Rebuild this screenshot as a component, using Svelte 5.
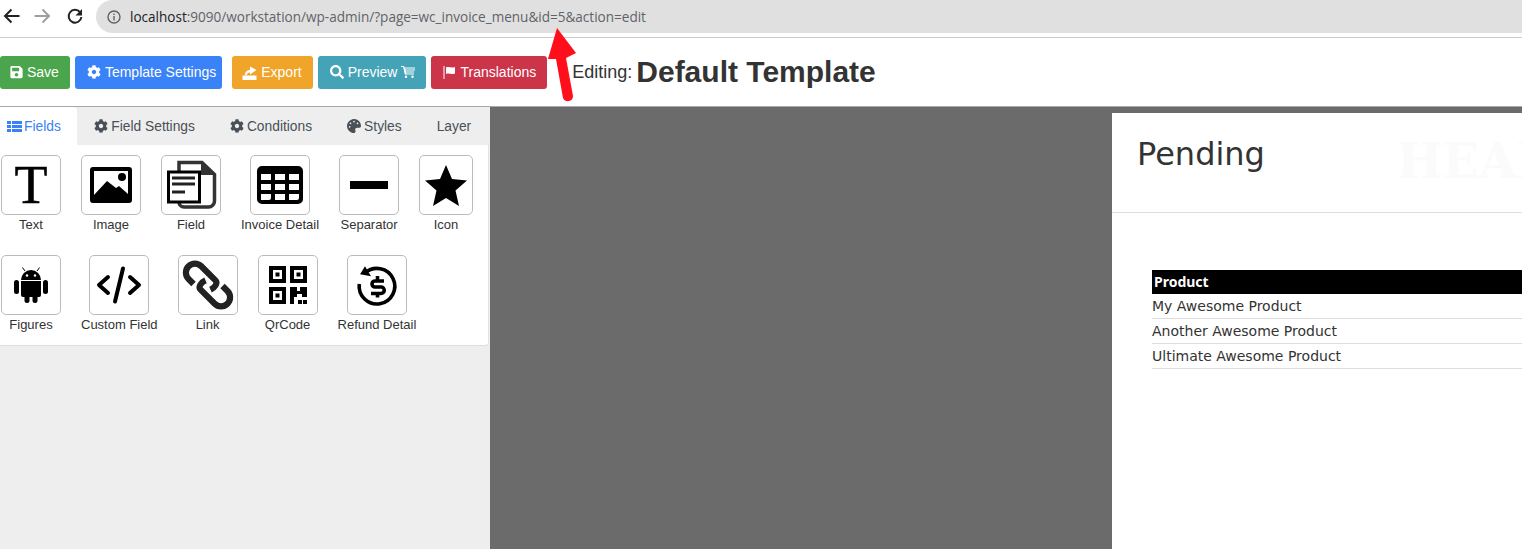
<script>
	const cog = 'M487.4 315.7l-42.6-24.6c4.3-23.2 4.3-47 0-70.2l42.6-24.6c4.9-2.8 7.1-8.6 5.5-14-11.1-35.6-30-67.8-54.7-94.6-3.8-4.1-10-5.1-14.8-2.3L380.8 110c-17.9-15.4-38.5-27.3-60.8-35.1V25.8c0-5.6-3.9-10.5-9.4-11.7-36.7-8.2-74.3-7.8-109.2 0-5.5 1.2-9.4 6.1-9.4 11.7V75c-22.2 7.9-42.8 19.8-60.8 35.1L88.7 85.5c-4.9-2.8-11-1.9-14.8 2.3-24.7 26.7-43.6 58.9-54.7 94.6-1.7 5.4.6 11.2 5.5 14L67.3 221c-4.3 23.2-4.3 47 0 70.2l-42.6 24.6c-4.9 2.8-7.1 8.6-5.5 14 11.1 35.6 30 67.8 54.7 94.6 3.8 4.1 10 5.1 14.8 2.3l42.6-24.6c17.9 15.4 38.5 27.3 60.8 35.1v49.2c0 5.6 3.9 10.5 9.4 11.7 36.7 8.2 74.3 7.8 109.2 0 5.5-1.2 9.4-6.1 9.4-11.7v-49.2c22.2-7.9 42.8-19.8 60.8-35.1l42.6 24.6c4.9 2.8 11 1.9 14.8-2.3 24.7-26.7 43.6-58.9 54.7-94.6 1.5-5.5-.7-11.3-5.6-14.1zM256 336c-44.1 0-80-35.9-80-80s35.9-80 80-80 80 35.9 80 80-35.9 80-80 80z';
	const save = 'M433.941 129.941l-83.882-83.882A48 48 0 0 0 316.118 32H48C21.49 32 0 53.49 0 80v352c0 26.51 21.49 48 48 48h352c26.51 0 48-21.49 48-48V163.882a48 48 0 0 0-14.059-33.941zM224 416c-35.346 0-64-28.654-64-64 0-35.346 28.654-64 64-64s64 28.654 64 64c0 35.346-28.654 64-64 64zm96-304.52V212c0 6.627-5.373 12-12 12H76c-6.627 0-12-5.373-12-12V108c0-6.627 5.373-12 12-12h228.52c3.183 0 6.235 1.264 8.485 3.515l3.48 3.48A11.996 11.996 0 0 1 320 111.48z';
	const search = 'M505 442.7L405.3 343c-4.5-4.5-10.6-7-17-7H372c27.6-35.3 44-79.7 44-128C416 93.1 322.9 0 208 0S0 93.1 0 208s93.1 208 208 208c48.3 0 92.7-16.4 128-44v16.3c0 6.4 2.5 12.5 7 17l99.7 99.7c9.4 9.4 24.6 9.4 33.9 0l28.3-28.3c9.4-9.4 9.4-24.6.1-34zM208 336c-70.7 0-128-57.2-128-128 0-70.7 57.2-128 128-128 70.7 0 128 57.2 128 128 0 70.7-57.2 128-128 128z';
	const palette = 'M204.3 5C104.9 24.4 24.8 104.3 5.2 203.4c-37 187 131.7 326.4 258.8 306.7 41.2-6.4 61.4-54.6 42.5-91.7-23.1-45.4 9.9-98.4 60.9-98.4h79.7c35.8 0 64.8-29.6 64.9-65.3C511.5 97.1 368.1-26.9 204.3 5zM96 320c-17.7 0-32-14.3-32-32s14.3-32 32-32 32 14.3 32 32-14.3 32-32 32zm32-128c-17.7 0-32-14.3-32-32s14.3-32 32-32 32 14.3 32 32-14.3 32-32 32zm128-64c-17.7 0-32-14.3-32-32s14.3-32 32-32 32 14.3 32 32-14.3 32-32 32zm128 64c-17.7 0-32-14.3-32-32s14.3-32 32-32 32 14.3 32 32-14.3 32-32 32z';

	const rows = ['My Awesome Product', 'Another Awesome Product', 'Ultimate Awesome Product'];
</script>

<div class="app">
	<div class="chrome">
		<div class="nav">
			<svg width="18" height="18" viewBox="0 0 18 18"><path d="M17.500 9H3M9.500 2.500L3 9l6.500 6.500" fill="none" stroke="#222" stroke-width="2"/></svg>
			<svg width="18" height="18" viewBox="0 0 18 18"><path d="M0.500 9H15M8.500 2.500L15 9l-6.500 6.500" fill="none" stroke="#a0a0a0" stroke-width="2"/></svg>
			<svg width="18" height="18" viewBox="0 0 18 18"><path d="M14 5.200A6.400 6.400 0 1 0 15.400 10" fill="none" stroke="#222" stroke-width="2"/><path d="M16 2v6.500H9.500z" fill="#222"/></svg>
		</div>
		<div class="address">
			<svg class="info" width="14" height="14" viewBox="0 0 14 14"><circle cx="7" cy="7" r="6" fill="none" stroke="#5f6368" stroke-width="1.4"/><path d="M6.300 6h1.400v4.400H6.300zM6.300 3.500h1.400v1.400H6.300z" fill="#5f6368"/></svg>
			<span class="url"><b>localhost</b>:9090/workstation/wp-admin/?page=wc_invoice_menu&amp;id=5&amp;action=edit</span>
		</div>
	</div>

	<div class="toolbar">
		<button class="green">
			<svg width="13" height="14" viewBox="0 0 448 512"><path d={save} /></svg>
			Save
		</button>
		<button class="blue">
			<svg width="14" height="14" viewBox="0 0 512 512"><path d={cog} /></svg>
			Template Settings
		</button>
		<button class="orange">
			<svg width="15" height="15" viewBox="0 0 15 15"><path d="M0.500 10.500h14V15h-14zM3 10C3 7 5 5 8 5V1.500L14.500 5 8 9.500V7.500C6 7.500 5 8.500 5 10z" /></svg>
			Export
		</button>
		<button class="teal">
			<svg width="14" height="14" viewBox="0 0 512 512"><path d={search} /></svg>
			Preview
			<svg width="14" height="12" viewBox="0 0 14 12"><path d="M0 0h3l.5 1.500H14v1H4l.4 1H14v1H4.600l.3 1H13v1H5.100l.4 1H13v1H3.800L2.200 1H0z" /><circle cx="5" cy="10.800" r="1.200" /><circle cx="11.500" cy="10.800" r="1.200" /></svg>
		</button>
		<button class="red">
			<svg width="14" height="13" viewBox="0 0 14 13"><path d="M0.500 0h1v13h-1zM3 1.500c3-1.500 5 1 9-.5v6.500c-4 1.500-6-1-9 .5z" /></svg>
			Translations
		</button>
		<span class="editing">Editing:</span>
		<h1>Default Template</h1>
	</div>

	<div class="main">
		<aside>
			<div class="tabs">
				<div class="tab active">
					<svg width="15" height="13" viewBox="0 0 15 13"><path d="M0 1h4v3H0zM5 1h10v3H5zM0 5h4v3H0zM5 5h10v3H5zM0 9h4v3H0zM5 9h10v3H5z" /></svg>
					Fields
				</div>
				<div class="tab">
					<svg width="14" height="14" viewBox="0 0 512 512"><path d={cog} /></svg>
					Field Settings
				</div>
				<div class="tab">
					<svg width="14" height="14" viewBox="0 0 512 512"><path d={cog} /></svg>
					Conditions
				</div>
				<div class="tab">
					<svg width="14" height="14" viewBox="0 0 512 512"><path d={palette} /></svg>
					Styles
				</div>
				<div class="tab">Layer</div>
			</div>

			<div class="fields">
				<div class="tool">
					<div class="box"><span class="t">T</span></div>
					<span>Text</span>
				</div>
				<div class="tool">
					<div class="box">
						<svg width="42" height="36" viewBox="0 0 42 36"><path fill-rule="evenodd" d="M3 0h36a3 3 0 0 1 3 3v30a3 3 0 0 1-3 3H3a3 3 0 0 1-3-3V3a3 3 0 0 1 3-3zM4 4v24l13-14 9 7 3-2 9 8V4z" /><circle cx="32" cy="10" r="4" /></svg>
					</div>
					<span>Image</span>
				</div>
				<div class="tool">
					<div class="box">
						<svg width="60" height="60" viewBox="0 0 60 60">
							<path d="M18 7.500h23l12.500 12V46a6 6 0 0 1-6 6H23a5 5 0 0 1-5-5V7.500z" fill="#fff" stroke="#333" stroke-width="3.500" />
							<path d="M40 6l15 14H40z" fill="#333" />
							<rect x="7.500" y="17" width="31" height="30" fill="#fff" stroke="#000" stroke-width="3" />
							<path d="M11 23h23M11 29h23M11 37h13" stroke="#222" stroke-width="3" fill="none" />
						</svg>
					</div>
					<span>Field</span>
				</div>
				<div class="tool">
					<div class="box">
						<svg width="46" height="38" viewBox="0 0 46 38">
							<path fill-rule="evenodd" d="M5 0h36a5 5 0 0 1 5 5v28a5 5 0 0 1-5 5H5a5 5 0 0 1-5-5V5a5 5 0 0 1 5-5zM4 8v6h10V8zm14 0v6h10V8zm14 0v6h10V8zM4 18v6h10v-6zm14 0v6h10v-6zm14 0v6h10v-6zM4 28v6h8a2 2 0 0 0 2-2v-4zm14 0v6h10v-6zm14 0v6h8a2 2 0 0 0 2-2v-4z" />
						</svg>
					</div>
					<span>Invoice Detail</span>
				</div>
				<div class="tool">
					<div class="box"><div class="sep"></div></div>
					<span>Separator</span>
				</div>
				<div class="tool">
					<div class="box star">
						<svg width="42" height="41" viewBox="0 0 42 41"><path d="M21 0l6 14 15 1.500-11.500 10L34 41l-13-8-13 8 3.500-15.500L0 15.500 15 14z" /></svg>
					</div>
					<span>Icon</span>
				</div>

				<div class="tool">
					<div class="box">
						<svg width="34" height="36" viewBox="0 0 34 36">
							<path d="M7 13a10 10 0 0 1 20 0z" />
							<path d="M11 4L8.500 0.500M23 4L25.500 0.500" stroke="#000" stroke-width="1" />
							<path d="M7 14h20v14a2 2 0 0 1-2 2H9a2 2 0 0 1-2-2z" />
							<rect x="0" y="13" width="5" height="14" rx="2.500" />
							<rect x="29" y="13" width="5" height="14" rx="2.500" />
							<rect x="10.500" y="28" width="5" height="8" rx="2.500" />
							<rect x="18.500" y="28" width="5" height="8" rx="2.500" />
							<circle cx="13" cy="8.500" r="1.200" fill="#fff" />
							<circle cx="21" cy="8.500" r="1.200" fill="#fff" />
						</svg>
					</div>
					<span>Figures</span>
				</div>
				<div class="tool">
					<div class="box">
						<svg width="46" height="38" viewBox="0 0 46 38" fill="none" stroke="#000" stroke-width="4" stroke-linecap="round" stroke-linejoin="round">
							<path d="M12 11L3 19l9 8M34 11l9 8-9 8M27 2.500L19 35.500" />
						</svg>
					</div>
					<span>Custom Field</span>
				</div>
				<div class="tool">
					<div class="box">
						<svg width="60" height="60" viewBox="0 0 60 60" fill="none" stroke="#222" stroke-width="6.200">
							<g transform="rotate(45 30 30)">
								<path d="M19 39.500H12a9 9 0 0 1 0-18H32c3.500 0 5 5 3 10" />
								<path d="M41 20.500H48a9 9 0 0 1 0 18H28c-3.500 0-5-5-3-10" />
							</g>
						</svg>
					</div>
					<span>Link</span>
				</div>
				<div class="tool">
					<div class="box">
						<svg width="38" height="38" viewBox="0 0 38 38">
							<path fill-rule="evenodd" d="M0 0h17v17H0zM4 4v9h9V4zM21 0h17v17H21zM25 4v9h9V4zM0 21h17v17H0zM4 25v9h9v-9z" />
							<path d="M6.500 6.500h4v4h-4zM27.500 6.500h4v4h-4zM6.500 27.500h4v4h-4z" />
							<path d="M21 21h7v4h3v-4h7v10h-5v-3h-5v3h-3v7h-4z" />
							<path d="M29 34h4v4h-4zM34 34h4v4h-4z" />
						</svg>
					</div>
					<span>QrCode</span>
				</div>
				<div class="tool">
					<div class="box">
						<svg width="60" height="60" viewBox="0 0 60 60" fill="none" stroke="#000">
							<path d="M18 18A17.800 17.800 0 1 1 12.300 29" stroke-width="3.600" />
							<path d="M18 11.300l-5 8 11 2z" fill="#000" stroke="none" />
							<path d="M37 26H28a3 3 0 0 0 0 6h6a3.200 3.200 0 0 1 0 6.500H24M30.500 21v4M30.500 38v4.500" stroke-width="3.600" />
						</svg>
					</div>
					<span>Refund Detail</span>
				</div>
			</div>
		</aside>

		<div class="canvas">
			<div class="page">
				<header>
					<span class="status">Pending</span>
					<span class="mark">HEADER</span>
				</header>
				<table>
					<thead><tr><th>Product</th></tr></thead>
					<tbody>
						{#each rows as row}
							<tr><td>{row}</td></tr>
						{/each}
					</tbody>
				</table>
			</div>
		</div>
	</div>

	<!-- red annotation arrow drawn over the screenshot -->
	<svg class="arrow" width="30" height="76" viewBox="0 0 30 76">
		<path d="M9 0L28 25 18 30 25 68C25 74 17 75 15 70L8 31 0 31z" fill="#fe0f1b" />
	</svg>
</div>

<style>
	:global(body) {
		overflow: hidden;
		background: #fff;
	}

	.app {
		position: relative;
		height: 549px;
		overflow: hidden;
		display: flex;
		flex-direction: column;
		font-family: "Liberation Sans", Arial, sans-serif;
		color: #333;
	}

	.chrome {
		height: 37px;
		flex: none;
		display: flex;
		align-items: flex-start;
		border-bottom: 1px solid #ccc;
		box-sizing: content-box;
	}

	.nav {
		width: 96px;
		flex: none;
		display: flex;
		gap: 14px;
		padding: 7px 0 0 2px;
		box-sizing: border-box;
	}

	.address {
		flex: 1;
		height: 33px;
		background: #e0e0e0;
		border-radius: 17px 0 0 17px;
		display: flex;
		align-items: center;
		padding-left: 11px;
		gap: 9px;
	}

	.url {
		font-family: "Open Sans", sans-serif;
		font-size: 13.550px;
		color: #5f6368;
	}

	.url b {
		font-weight: normal;
		color: #202124;
	}

	.toolbar {
		height: 68px;
		flex: none;
		display: flex;
		align-items: center;
		gap: 5px;
		border-bottom: 1px solid #a9a9a9;
		box-sizing: content-box;
	}

	button {
		height: 33px;
		border: 0;
		border-radius: 3px;
		padding: 0 11px 0 10px;
		color: #fff;
		font: 14px "Liberation Sans", Arial, sans-serif;
		display: flex;
		align-items: center;
		gap: 4px;
	}

	button svg {
		fill: #fff;
	}

	.green { background: #4aa54c; }
	.blue { background: #3a82f8; padding: 0 6px 0 12px; margin-right: 5px; }
	.orange { background: #f0a429; }
	.teal { background: #45a3b8; padding: 0 11px 0 12px; }
	.red { background: #cc344a; padding: 0 11px 0 12px; gap: 3px; }

	.editing {
		font-size: 18px;
		margin-left: 20px;
	}

	h1 {
		margin: 0 0 0 -1px;
		font-size: 30px;
		font-weight: bold;
		color: #333;
	}

	.main {
		flex: 1;
		display: flex;
		min-height: 0;
	}

	aside {
		width: 490px;
		flex: none;
		background: #eee;
	}

	.tabs {
		height: 38px;
		display: flex;
		font-size: 13.800px;
		color: #495057;
		background: #eee;
	}

	.tab {
		display: flex;
		flex: none;
		align-items: center;
		gap: 3px;
		padding: 0 17.500px;
		white-space: nowrap;
	}

	.tab svg {
		fill: #495057;
	}

	.tab.active {
		background: #fff;
		color: #3a82f8;
		padding: 0 16px 0 7px;
		gap: 2px;
		border-top-right-radius: 4px;
	}

	.tab.active svg {
		fill: #3a82f8;
	}

	.fields {
		background: #fff;
		width: 489px;
		height: 201px;
		box-sizing: border-box;
		border-bottom: 1px solid #ddd;
		border-right: 1px solid #e4e4e4;
		border-radius: 0 0 4px 0;
		padding: 10px 0 0 1px;
		display: flex;
		flex-wrap: wrap;
		align-content: flex-start;
		gap: 22px 20px;
	}

	.tool {
		display: flex;
		flex-direction: column;
		align-items: center;
		gap: 1px;
		height: 78px;
		font-size: 13px;
		line-height: 18px;
		color: #333;
		white-space: nowrap;
	}

	.box {
		width: 60px;
		height: 60px;
		flex: none;
		box-sizing: border-box;
		border: 1px solid #bbb;
		border-radius: 5px;
		display: flex;
		align-items: center;
		justify-content: center;
		overflow: hidden;
	}

	.box svg {
		flex: none;
	}

	.box.star {
		width: 54px;
	}

	.t {
		font: 54px/1 "Liberation Serif", serif;
		color: #000;
		-webkit-text-stroke: 0.5px #000;
	}

	.sep {
		width: 38px;
		height: 8px;
		background: #000;
	}

	.canvas {
		flex: 1;
		background: #6b6b6b;
		padding: 6px 0 0 622px;
		min-width: 0;
		overflow: hidden;
	}

	.page {
		background: #fff;
		height: 100%;
		width: 900px;
		font-family: "DejaVu Sans", Verdana, sans-serif;
	}

	header {
		height: 79px;
		border-bottom: 1px solid #ddd;
		display: flex;
		padding: 20px 0 0 25px;
		box-sizing: content-box;
	}

	.status {
		font-size: 32px;
		line-height: 42px;
		color: #333;
		width: 260px;
	}

	.mark {
		font: bold 48px/56px "DejaVu Serif", serif;
		color: #fbfbfb;
		white-space: nowrap;
	}

	table {
		margin: 57px 0 0 40px;
		width: 800px;
		border-collapse: collapse;
		font-size: 14px;
		color: #333;
	}

	th {
		height: 24px;
		padding: 0 2px 2px;
		box-sizing: border-box;
		background: #000;
		color: #fff;
		text-align: left;
		font: bold 14px "Noto Sans", sans-serif;
	}

	td {
		height: 24px;
		padding: 0;
		border-bottom: 1px solid #ddd;
	}

	.arrow {
		position: absolute;
		left: 548px;
		top: 28px;
	}
</style>
